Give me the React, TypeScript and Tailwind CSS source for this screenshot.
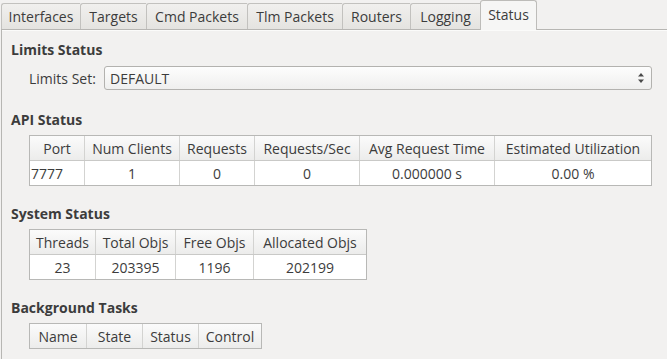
import React from "react";

type Col = { label: string; width: number; align?: "left" | "center" };

const tabs = [
  { label: "Interfaces", width: 79 },
  { label: "Targets", width: 66 },
  { label: "Cmd Packets", width: 101 },
  { label: "Tlm Packets", width: 95 },
  { label: "Routers", width: 68 },
  { label: "Logging", width: 70 },
];

const apiCols: Col[] = [
  { label: "Port", width: 55, align: "left" },
  { label: "Num Clients", width: 95 },
  { label: "Requests", width: 75 },
  { label: "Requests/Sec", width: 105 },
  { label: "Avg Request Time", width: 135 },
  { label: "Estimated Utilization", width: 157 },
];

const systemCols: Col[] = [
  { label: "Threads", width: 66 },
  { label: "Total Objs", width: 80 },
  { label: "Free Objs", width: 78 },
  { label: "Allocated Objs", width: 113 },
];

const taskCols: Col[] = [
  { label: "Name", width: 57 },
  { label: "State", width: 56 },
  { label: "Status", width: 56 },
  { label: "Control", width: 63 },
];

function Table({ cols, rows }: { cols: Col[]; rows: string[][] }) {
  return (
    <div className="ml-[27px] w-fit border border-[#b8b8b6] bg-white">
      <div className="flex h-[24px] bg-gradient-to-b from-[#fbfbfb] to-[#ececeb]">
        {cols.map((c, i) => (
          <div
            key={c.label}
            style={{ width: i === 0 ? c.width - 1 : c.width }}
            className={`flex items-center justify-center whitespace-nowrap text-[#3c3c3c] ${i > 0 ? "border-l border-[#d3d3d1]" : ""}`}
          >
            {c.label}
          </div>
        ))}
      </div>
      {rows.map((row, r) => (
        <div key={r} className="flex h-[25px] border-t border-[#c9c9c7]">
          {row.map((v, i) => (
            <div
              key={i}
              style={{ width: i === 0 ? cols[i].width - 1 : cols[i].width }}
              className={`flex items-center text-[#3c3c3c] ${cols[i].align === "left" ? "justify-start pl-[1px]" : "justify-center"} ${i > 0 ? "border-l border-[#d3d3d1]" : ""}`}
            >
              {v}
            </div>
          ))}
        </div>
      ))}
    </div>
  );
}

function Heading({ children }: { children: React.ReactNode }) {
  return <div className="h-[16px] pl-[9px] font-bold leading-[16px] text-[#3c3c3c]">{children}</div>;
}

export default function App() {
  return (
    <div
      className="h-[359px] w-[667px] overflow-hidden bg-[#f2f1f0] text-[14px] text-[#3c3c3c]"
      style={{ fontFamily: '"Open Sans", "Noto Sans", sans-serif' }}
    >
      <div className="ml-[1px] flex h-[29px] items-end">
        {tabs.map((t) => (
          <div
            key={t.label}
            style={{ width: t.width }}
            className="flex h-[26px] items-center justify-center whitespace-nowrap rounded-tl-[3px] border-l border-t border-[#c2c1be] bg-gradient-to-b from-[#f1f0ee] to-[#e4e3e0] pb-[1px]"
          >
            {t.label}
          </div>
        ))}
        <div className="relative z-10 mb-[-1px] flex h-[30px] w-[57px] items-center justify-center rounded-t-[3px] border-x border-t border-[#bdbcb9] bg-[#f6f6f5] pb-[3px]">
          Status
        </div>
      </div>

      <div className="ml-[1px] h-[400px] border-l border-t border-[#b7b6b3] bg-[#f2f1f0]">
        <div className="border-t border-[#fbfbfa] pt-[11px]">
          <Heading>Limits Status</Heading>

          <div className="mt-[8px] flex items-center">
            <span className="ml-[27px] w-[70px] whitespace-nowrap">Limits Set:</span>
            <div className="ml-[5px] flex h-[24px] w-[548px] items-center justify-between rounded-[3px] border border-[#b3b2af] bg-gradient-to-b from-[#fdfdfd] to-[#efefee] pl-[5px] pr-[7px]">
              <span>DEFAULT</span>
              <svg width="6" height="12" viewBox="0 0 6 12" className="text-[#4a4a4a]">
                <path d="M3 1 L6 4.5 L0 4.5 Z" fill="currentColor" />
                <path d="M3 11 L6 7.5 L0 7.5 Z" fill="currentColor" />
              </svg>
            </div>
          </div>

          <div className="mt-[22px]">
            <Heading>API Status</Heading>
          </div>
          <div className="mt-[7px]">
            <Table cols={apiCols} rows={[["7777", "1", "0", "0", "0.000000 s", "0.00 %"]]} />
          </div>

          <div className="mt-[20px]">
            <Heading>System Status</Heading>
          </div>
          <div className="mt-[7px]">
            <Table cols={systemCols} rows={[["23", "203395", "1196", "202199"]]} />
          </div>

          <div className="mt-[20px]">
            <Heading>Background Tasks</Heading>
          </div>
          <div className="mt-[7px]">
            <Table cols={taskCols} rows={[]} />
          </div>
        </div>
      </div>
    </div>
  );
}
